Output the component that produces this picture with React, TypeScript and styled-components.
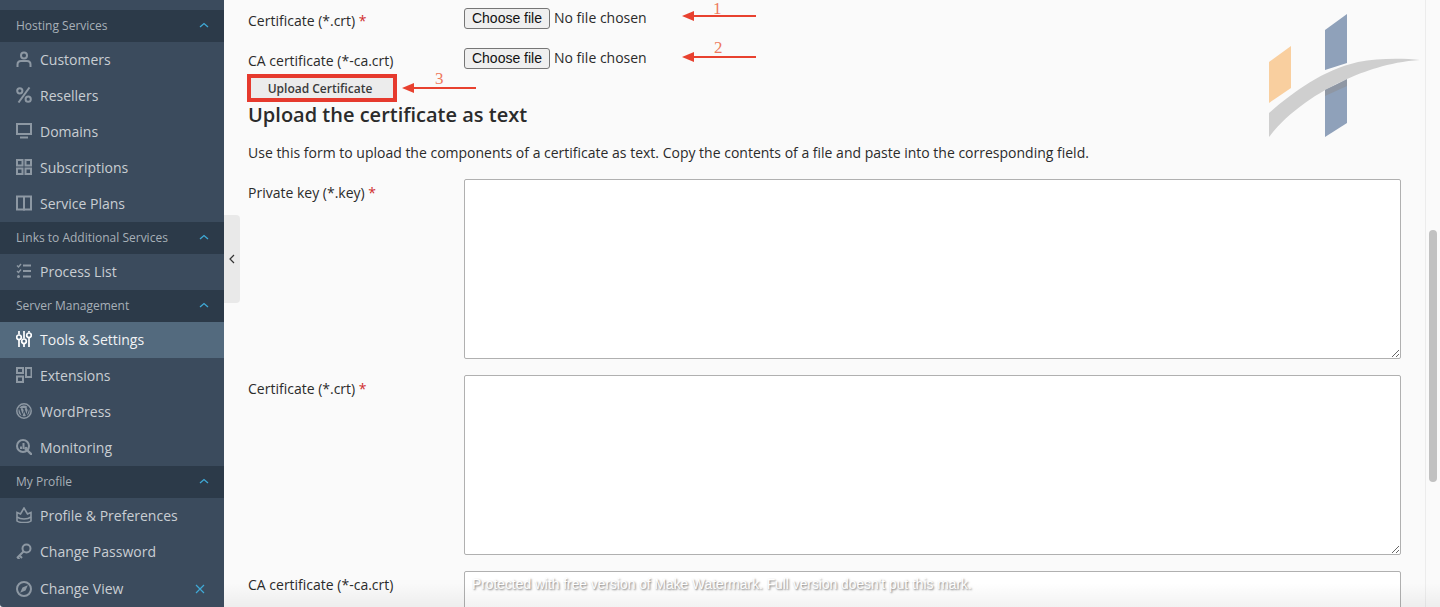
import React from "react";
import styled, { createGlobalStyle } from "styled-components";

const GlobalStyle = createGlobalStyle`
  html, body {
    margin: 0;
    height: 607px;
    overflow: hidden;
    background: #fafafa;
  }
`;

const stroke = {
  fill: "none",
  stroke: "currentColor",
  strokeWidth: 2,
};

const icons: Record<string, React.ReactNode> = {
  user: (
    <g {...stroke}>
      <circle cx="8" cy="4.500" r="3" />
      <path d="M1.500 16v-2.500C1.500 11 3 10 5 10h6c2 0 3.500 1 3.500 3.500V16" />
    </g>
  ),
  percent: (
    <g {...stroke}>
      <circle cx="3.800" cy="3.800" r="2.600" />
      <circle cx="12.200" cy="12.200" r="2.600" />
      <path d="M13.500 .5 2.500 15.500" />
    </g>
  ),
  monitor: (
    <g {...stroke}>
      <rect x="1" y="1" width="14" height="10" />
      <path d="M4 14.500h8" />
    </g>
  ),
  grid: (
    <g {...stroke}>
      <rect x="1" y="1" width="5.500" height="5.500" />
      <rect x="9.500" y="1" width="5.500" height="5.500" />
      <rect x="1" y="9.500" width="5.500" height="5.500" />
      <rect x="9.500" y="9.500" width="5.500" height="5.500" />
    </g>
  ),
  book: (
    <g {...stroke}>
      <rect x="1" y="1.500" width="14" height="13" />
      <path d="M8 1.500v14" />
    </g>
  ),
  list: (
    <g {...stroke}>
      <path d="M7 2.500h8M7 8h8M7 13.500h8" />
      <path d="M1 2.500 2.500 4 5 1M1 8l1.500 1.500L5 6.500" strokeWidth="1.400" />
      <circle cx="2.500" cy="13.500" r="1.500" fill="currentColor" stroke="none" />
    </g>
  ),
  sliders: (
    <g {...stroke} strokeWidth="1.700">
      <path d="M3 0v3.500M3 9v7M8 0v7.500M8 13v3M13 0v1.500M13 7v9" />
      <circle cx="3" cy="6.300" r="2.300" />
      <circle cx="8" cy="10.300" r="2.300" />
      <circle cx="13" cy="4.300" r="2.300" />
    </g>
  ),
  blocks: (
    <g {...stroke}>
      <rect x="1" y="1" width="6" height="5" />
      <rect x="1" y="9.500" width="6" height="5.500" />
      <rect x="10" y="1" width="5.500" height="9" />
    </g>
  ),
  wordpress: (
    <g>
      <circle cx="8" cy="8" r="7.200" {...stroke} strokeWidth="1.500" />
      <path
        fill="currentColor"
        d="M2.500 8c0 2.200 1.300 4 3.100 4.900L3 5.800A5.500 5.500 0 0 0 2.500 8Zm9.200-.3c0-.7-.3-1.200-.5-1.600-.3-.5-.6-.9-.6-1.300 0-.5.400-.9.900-.9A5.500 5.500 0 0 0 3.300 5h.4c.6 0 1.500-.1 1.500-.1.300 0 .3.400 0 .5 0 0-.3 0-.6 0l1.900 5.700 1.200-3.500-.8-2.200-.6-.1c-.3 0-.3-.5 0-.4 0 0 .9.100 1.400.1.600 0 1.500-.1 1.500-.1.300 0 .3.400 0 .5 0 0-.3 0-.6 0l1.900 5.600.5-1.700c.2-.7.400-1.200.4-1.700Zm-3.600.8-1.600 4.600a5.500 5.500 0 0 0 3.400-.1L8.100 8.500Zm4.800-3.100.1.600c0 .6-.1 1.200-.4 2l-1.700 4.700a5.500 5.500 0 0 0 2-7.300Z"
      />
    </g>
  ),
  monitoring: (
    <g {...stroke}>
      <circle cx="7" cy="7" r="6" />
      <path d="m11.500 11.500 4.500 4.500" strokeWidth="2.400" />
      <path d="M5 10V7.500M7.500 10V4" strokeWidth="2" />
      <circle cx="10" cy="9.500" r=".7" fill="currentColor" />
    </g>
  ),
  crown: (
    <g {...stroke} strokeWidth="1.600">
      <path d="M1 5.500 4.500 7 8 1l3.500 6L15 5.500V14c-1 1-3.500 1.500-7 1.500S2 15 1 14Z" />
      <path d="M1 10c2 1.500 4 2 7 2s5-.5 7-2" />
    </g>
  ),
  key: (
    <g {...stroke}>
      <circle cx="10.500" cy="5.500" r="4" />
      <path d="M7.500 8.500 1 15M3.500 12.500 6 15M1.500 14.500l2 1.500" />
    </g>
  ),
  compass: (
    <g>
      <circle cx="8" cy="8" r="7" {...stroke} />
      <path fill="currentColor" d="M11.800 4.200 9.500 9.500l-5.300 2.300 2.300-5.300Z" />
    </g>
  ),
};

type NavItem = { label: string; icon: string; active?: boolean; pin?: boolean };
type NavGroup = { title: string; items: NavItem[] };

const groups: NavGroup[] = [
  {
    title: "Hosting Services",
    items: [
      { label: "Customers", icon: "user" },
      { label: "Resellers", icon: "percent" },
      { label: "Domains", icon: "monitor" },
      { label: "Subscriptions", icon: "grid" },
      { label: "Service Plans", icon: "book" },
    ],
  },
  {
    title: "Links to Additional Services",
    items: [{ label: "Process List", icon: "list" }],
  },
  {
    title: "Server Management",
    items: [
      { label: "Tools & Settings", icon: "sliders", active: true },
      { label: "Extensions", icon: "blocks" },
      { label: "WordPress", icon: "wordpress" },
      { label: "Monitoring", icon: "monitoring" },
    ],
  },
  {
    title: "My Profile",
    items: [
      { label: "Profile & Preferences", icon: "crown" },
      { label: "Change Password", icon: "key" },
      { label: "Change View", icon: "compass", pin: true },
    ],
  },
];

const Page = styled.div`
  display: flex;
  height: 607px;
  overflow: hidden;
  position: relative;
  font-family: "Open Sans", "Liberation Sans", sans-serif;
  color: #222;
`;

const Sidebar = styled.nav`
  flex: 0 0 224px;
  padding-top: 10px;
  background-color: #3b4b5d;
  border-bottom-left-radius: 3px;
`;

const GroupHeader = styled.div`
  display: flex;
  align-items: center;
  justify-content: space-between;
  box-sizing: border-box;
  height: 32px;
  padding: 0 14px 2px 16px;
  background-color: rgba(33, 45, 57, 0.55);
  font-size: 12px;
  color: #a8b0b8;
`;

const NavRow = styled.div<{ $active?: boolean; $last?: boolean }>`
  display: flex;
  align-items: center;
  gap: 8px;
  box-sizing: border-box;
  height: ${(p) => (p.$last ? 37 : 36)}px;
  padding: 0 16px ${(p) => (p.$last ? 0 : 2)}px;
  font-size: 14px;
  background: ${(p) => (p.$active ? "#536a7e" : "transparent")};
  color: ${(p) => (p.$active ? "#f1f3f5" : "#c9ced3")};
`;

const NavIcon = styled.svg<{ $active?: boolean }>`
  flex: none;
  width: 16px;
  height: 16px;
  color: ${(p) => (p.$active ? "#ffffff" : "#8d98a3")};
`;

const NavLabel = styled.span`
  flex: 1;
  white-space: nowrap;
`;

const Chevron = styled.svg`
  width: 12px;
  height: 8px;
  fill: none;
  stroke: #3fa9d6;
  stroke-width: 1.300;
`;

const PinMark = styled.svg`
  width: 10px;
  height: 10px;
  margin-right: 3px;
  fill: none;
  stroke: #3fa9d6;
  stroke-width: 1.200;
`;

const Handle = styled.div`
  flex: 0 0 16px;
  height: 88px;
  margin-top: 215px;
  display: flex;
  align-items: center;
  justify-content: center;
  background: #e9e9e9;
  border-radius: 0 4px 4px 0;
  svg {
    width: 6px;
    height: 10px;
    fill: none;
    stroke: #333;
    stroke-width: 1.200;
  }
`;

const Main = styled.main`
  flex: 1;
  min-width: 0;
  padding: 8px 24px 0 8px;
  background: #fafafa;
`;

const Scrollbar = styled.div`
  flex: 0 0 15px;
  box-sizing: border-box;
  padding: 230px 3px 0 3px;
  border-left: 1px solid #ececec;
  background: #fafafa;
`;

const ScrollThumb = styled.div`
  width: 8px;
  height: 252px;
  border-radius: 4px;
  background: #c1c1c1;
`;

const FileRow = styled.div`
  display: grid;
  grid-template-columns: 216px 1fr;
  height: 40px;
  font-size: 14px;
`;

const Label = styled.label`
  padding-top: 3px;
  font-size: 14px;
  line-height: 19px;
  color: #2b2b2b;
`;

const Required = styled.span`
  color: #d02d2d;
`;

const FileControl = styled.div`
  display: flex;
  align-items: flex-start;
  gap: 4px;
`;

const ChooseButton = styled.button`
  width: 86px;
  height: 21px;
  padding: 0;
  border: 1px solid #767676;
  border-radius: 3px;
  background: #efefef;
  font-family: "Liberation Sans", Arial, sans-serif;
  font-size: 14px;
  line-height: 19px;
  color: #111;
`;

const NoFile = styled.span`
  font-size: 14px;
  line-height: 20px;
  color: #2b2b2b;
`;

const UploadFrame = styled.div`
  width: 150px;
  height: 28px;
  margin: -14px 0 0 -1px;
  padding: 0 4px 0 0;
  box-sizing: border-box;
  border: 4px solid #e63a2e;
  background: #ececec;
  display: flex;
  align-items: center;
  justify-content: center;
`;

const UploadText = styled.span`
  font-size: 12px;
  font-weight: 600;
  color: #3a3a3a;
`;

const Heading = styled.h2`
  margin: 0;
  font-size: 20px;
  line-height: 26px;
  font-weight: 600;
  color: #2b2b2b;
`;

const Intro = styled.p`
  margin: 15px 0 16px;
  font-size: 14px;
  line-height: 20px;
  color: #2b2b2b;
`;

const TextRow = styled.div`
  display: grid;
  grid-template-columns: 216px 1fr;
  margin-bottom: 16px;
`;

const TextLabel = styled(Label)`
  padding-top: 4px;
`;

const TextBox = styled.textarea`
  display: block;
  box-sizing: border-box;
  width: 937px;
  height: 180px;
  margin: 0;
  padding: 4px 8px;
  border: 1px solid #b0b0b0;
  border-radius: 2px;
  background: #fff;
  resize: vertical;
  outline: none;
`;

const Arrow = styled.svg<{ $x: number; $y: number }>`
  position: absolute;
  left: ${(p) => p.$x}px;
  top: ${(p) => p.$y}px;
  width: 74px;
  height: 12px;
`;

const ArrowNumber = styled.span<{ $x: number; $y: number }>`
  position: absolute;
  left: ${(p) => p.$x}px;
  top: ${(p) => p.$y}px;
  font-family: "Liberation Serif", serif;
  font-size: 17px;
  line-height: 18px;
  color: #ee7a5e;
`;

const Logo = styled.svg`
  position: absolute;
  left: 1268px;
  top: 12px;
  width: 155px;
  height: 128px;
`;

const WatermarkNote = styled.div`
  position: absolute;
  left: 472px;
  top: 577px;
  font-family: "Liberation Sans", Arial, sans-serif;
  font-size: 13.800px;
  line-height: 16px;
  color: #fff;
  text-shadow: 1px 1px 2px rgba(0, 0, 0, 0.55);
  white-space: nowrap;
`;

const Fade = styled.div`
  position: absolute;
  left: 224px;
  right: 0;
  bottom: 0;
  height: 24px;
  background: linear-gradient(rgba(0, 0, 0, 0), rgba(0, 0, 0, 0.05));
  pointer-events: none;
`;

const RedArrow = ({ x, y }: { x: number; y: number }) => (
  <Arrow $x={x} $y={y} viewBox="0 0 74 12">
    <path d="M10 6H74" stroke="#e8412f" strokeWidth="1.800" fill="none" />
    <path d="M0 6 12 1v10Z" fill="#e8412f" />
  </Arrow>
);

export default function App() {
  return (
    <>
      <GlobalStyle />
      <Page>
        <Sidebar>
          {groups.map((group) => (
            <section key={group.title}>
              <GroupHeader>
                {group.title}
                <Chevron viewBox="0 0 12 8">
                  <path d="M2 6 6 2.500 10 6" />
                </Chevron>
              </GroupHeader>
              {group.items.map((item) => (
                <NavRow key={item.label} $active={item.active} $last={item.pin}>
                  <NavIcon viewBox="0 0 16 16" $active={item.active}>
                    {icons[item.icon]}
                  </NavIcon>
                  <NavLabel>{item.label}</NavLabel>
                  {item.pin && (
                    <PinMark viewBox="0 0 10 10">
                      <path d="M1 1 9 9M9 1 1 9" />
                    </PinMark>
                  )}
                </NavRow>
              ))}
            </section>
          ))}
        </Sidebar>
        <Handle>
          <svg viewBox="0 0 6 10">
            <path d="M5 1 1 5l4 4" />
          </svg>
        </Handle>
        <Main>
          <FileRow>
            <Label>
              Certificate (*.crt) <Required>*</Required>
            </Label>
            <FileControl>
              <ChooseButton>Choose file</ChooseButton>
              <NoFile>No file chosen</NoFile>
            </FileControl>
          </FileRow>
          <FileRow>
            <Label>CA certificate (*-ca.crt)</Label>
            <FileControl>
              <ChooseButton>Choose file</ChooseButton>
              <NoFile>No file chosen</NoFile>
            </FileControl>
          </FileRow>
          <UploadFrame>
            <UploadText>Upload Certificate</UploadText>
          </UploadFrame>
          <Heading>Upload the certificate as text</Heading>
          <Intro>
            Use this form to upload the components of a certificate as text. Copy the contents of a
            file and paste into the corresponding field.
          </Intro>
          <TextRow>
            <TextLabel>
              Private key (*.key) <Required>*</Required>
            </TextLabel>
            <TextBox />
          </TextRow>
          <TextRow>
            <TextLabel>
              Certificate (*.crt) <Required>*</Required>
            </TextLabel>
            <TextBox />
          </TextRow>
          <TextRow>
            <TextLabel>CA certificate (*-ca.crt)</TextLabel>
            <TextBox />
          </TextRow>
        </Main>
        <Scrollbar>
          <ScrollThumb />
        </Scrollbar>
        <RedArrow x={682} y={10} />
        <RedArrow x={682} y={51} />
        <RedArrow x={402} y={82} />
        <ArrowNumber $x={713} $y={0}>1</ArrowNumber>
        <ArrowNumber $x={714} $y={39}>2</ArrowNumber>
        <ArrowNumber $x={435} $y={70}>3</ArrowNumber>
        <Logo viewBox="0 0 155 128">
          <path d="M1 50 23 34v42L1 91Z" fill="#f9cf9f" />
          <path d="M57 18 79 2v49l-22 7Z" fill="#8fa1ba" />
          <path d="M57 78 79 68v43l-22 14Z" fill="#8fa1ba" />
          <path d="M1 101C25 80 55 58 90 50c20-4 45-4 62-2-32 2-57 12-73 19-29 13-59 33-78 58Z" fill="#cfcfcf" />
          <path d="M57 78 79 67v7L57 84Z" fill="#8f97a4" />
        </Logo>
        <WatermarkNote>
          Protected with free version of Make Watermark. Full version doesn't put this mark.
        </WatermarkNote>
        <Fade />
      </Page>
    </>
  );
}
